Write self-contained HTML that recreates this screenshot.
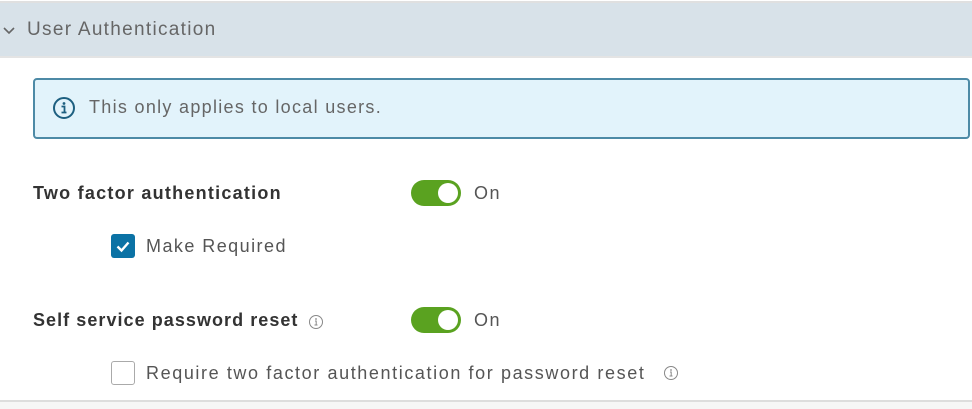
<!DOCTYPE html>
<html><head><style>
body{margin:0;width:972px;height:407px;background:#fff;font-family:"Liberation Sans",sans-serif;position:relative;overflow:hidden}
.a{position:absolute;white-space:nowrap}
.hdr{left:0;top:1px;width:972px;height:57px;background:#d8e2e9;border-top:2px solid #e0e0e0;border-bottom:2px solid #e4e4e4;box-sizing:border-box}
.info{left:33px;top:78px;width:937px;height:61px;background:#e2f3fb;border:2px solid #4d8aa6;border-radius:4px;box-sizing:border-box}
.tg{width:50px;height:26px;border-radius:13px;background:#5aa220}
.tg:after{content:"";position:absolute;right:3px;top:3px;width:20px;height:20px;border-radius:50%;background:#fff}
.lbl{font-weight:bold;color:#333;font-size:18px}
.t{color:#555;font-size:18px}
</style></head><body>
<div class="a hdr"></div>
<svg class="a" style="left:2px;top:26px" width="14" height="10"><path d="M2 2 L7 7 L12 2" fill="none" stroke="#666" stroke-width="1.6"/></svg>
<div class="a" style="left:27px;top:19px;font-size:19px;color:#666;letter-spacing:1.3px">User Authentication</div>
<div class="a info"></div>
<svg class="a" style="left:52px;top:96px" width="24" height="24"><circle cx="12" cy="12" r="10" fill="none" stroke="#1d5f80" stroke-width="2"/><circle cx="12" cy="7.5" r="1.4" fill="#1d5f80"/><path d="M9.5 10.5h3v6M9.5 16.5h5" fill="none" stroke="#1d5f80" stroke-width="1.8"/></svg>
<div class="a" style="left:89px;top:97px;font-size:18px;color:#666;letter-spacing:1.3px">This only applies to local users.</div>

<div class="a lbl" style="left:33px;top:183px;letter-spacing:1.25px">Two factor authentication</div>
<div class="a tg" style="left:411px;top:180px"></div>
<div class="a t" style="left:474px;top:183px;letter-spacing:1.5px">On</div>
<div class="a" style="left:111px;top:234px;width:24px;height:24px;background:#0b72a5;border-radius:3px"></div>
<svg class="a" style="left:111px;top:234px" width="24" height="24"><path d="M6.5 12.5l4 4 7-8" fill="none" stroke="#fff" stroke-width="2.4"/></svg>
<div class="a t" style="left:146px;top:236px;letter-spacing:1.45px">Make Required</div>

<div class="a lbl" style="left:33px;top:310px;letter-spacing:1.05px">Self service password reset</div>
<svg class="a" style="left:307px;top:313px" width="18" height="18"><circle cx="9" cy="9" r="6.5" fill="none" stroke="#888" stroke-width="1"/><circle cx="9" cy="6" r="0.9" fill="#888"/><path d="M8 8h1.2v4M7.5 12h3" fill="none" stroke="#888" stroke-width="1"/></svg>
<div class="a tg" style="left:411px;top:307px"></div>
<div class="a t" style="left:474px;top:310px;letter-spacing:1.5px">On</div>
<div class="a" style="left:111px;top:361px;width:24px;height:24px;border:1.5px solid #aaa;border-radius:3px;box-sizing:border-box"></div>
<div class="a t" style="left:146px;top:363px;letter-spacing:1.6px">Require two factor authentication for password reset</div>
<svg class="a" style="left:662px;top:364px" width="18" height="18"><circle cx="9" cy="9" r="6.5" fill="none" stroke="#888" stroke-width="1"/><circle cx="9" cy="6" r="0.9" fill="#888"/><path d="M8 8h1.2v4M7.5 12h3" fill="none" stroke="#888" stroke-width="1"/></svg>
<div class="a" style="left:0;top:400px;width:972px;height:7px;background:#f6f6f6;border-top:2px solid #ddd"></div>
</body></html>
